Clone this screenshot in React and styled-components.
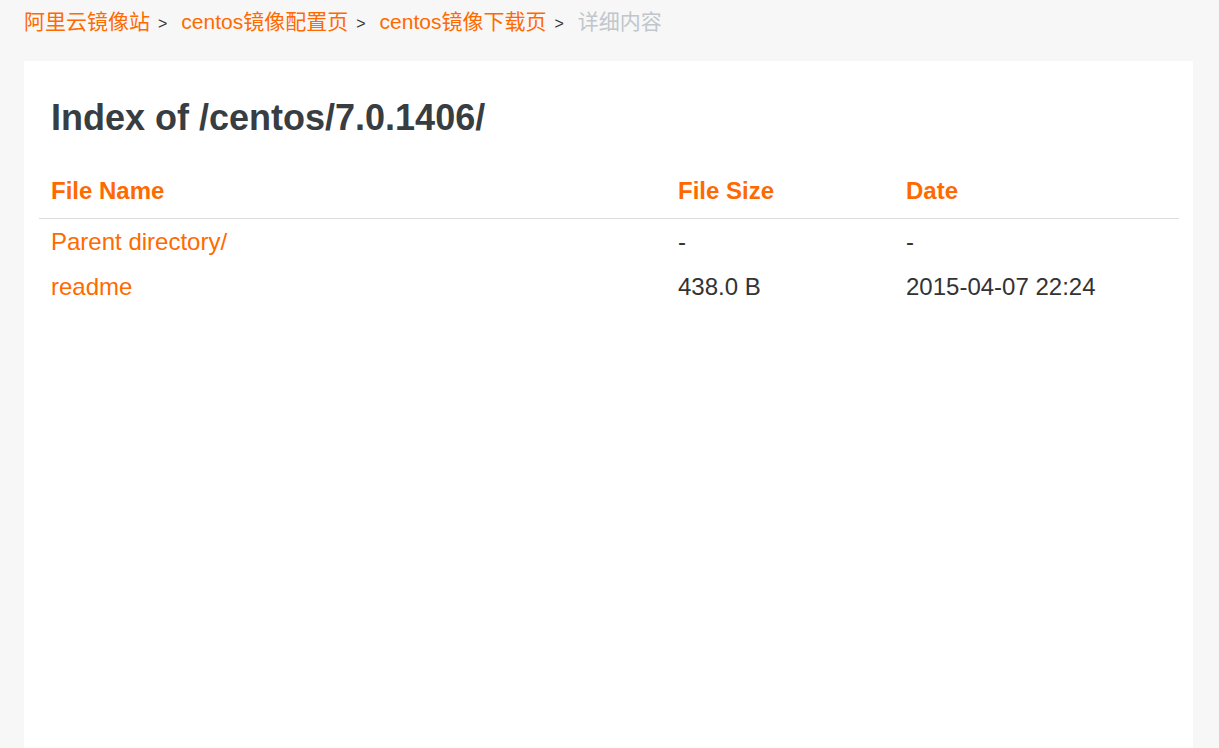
import React from "react";
import styled, { createGlobalStyle } from "styled-components";

const GlobalStyle = createGlobalStyle`
  html, body {
    margin: 0;
    padding: 0;
    background: #f7f7f7;
  }
  body {
    font-family: "Liberation Sans", Arial, "Noto Sans CJK SC", sans-serif;
    color: #333333;
  }
`;

const crumbs = [
  { label: "阿里云镜像站" },
  { label: "centos镜像配置页" },
  { label: "centos镜像下载页" },
  { label: "详细内容", current: true },
];

const files = [
  { name: "Parent directory/", size: "-", date: "-" },
  { name: "readme", size: "438.0 B", date: "2015-04-07 22:24" },
];

const App = () => {
  return (
    <Page>
      <GlobalStyle />
      <Breadcrumb>
        {crumbs.map((c, i) => (
          <React.Fragment key={c.label}>
            <Crumb $current={c.current}>{c.label}</Crumb>
            {i < crumbs.length - 1 && <Separator>&gt;</Separator>}
          </React.Fragment>
        ))}
      </Breadcrumb>

      <Card>
        <Title>Index of /centos/7.0.1406/</Title>
        <FileTable>
          <colgroup>
            <col style={{ width: "55%" }} />
            <col style={{ width: "20%" }} />
            <col style={{ width: "25%" }} />
          </colgroup>
          <thead>
            <tr>
              <HeadCell>File Name</HeadCell>
              <HeadCell>File Size</HeadCell>
              <HeadCell>Date</HeadCell>
            </tr>
          </thead>
          <tbody>
            {files.map((f) => (
              <tr key={f.name}>
                <Cell>
                  <FileLink href="#">{f.name}</FileLink>
                </Cell>
                <Cell>{f.size}</Cell>
                <Cell>{f.date}</Cell>
              </tr>
            ))}
          </tbody>
        </FileTable>
      </Card>
    </Page>
  );
};

export default App;

const Page = styled.div`
  min-height: 100vh;
  display: flex;
  flex-direction: column;
`;

const Breadcrumb = styled.div`
  display: flex;
  align-items: baseline;
  padding: 0 24px;
  height: 44px;
  line-height: 44px;
  font-size: 21px;
  margin-bottom: 17px;
`;

const Crumb = styled.a`
  color: ${(p) => (p.$current ? "#c0c6cc" : "#ff6a00")};
  text-decoration: none;
`;

const Separator = styled.span`
  color: #333333;
  font-size: 16px;
  padding: 0 14px 0 8px;
`;

const Card = styled.div`
  flex: 1;
  background: #ffffff;
  margin: 0 26px 0 24px;
  padding: 0 14px 0 15px;
  min-height: 700px;
`;

const Title = styled.h1`
  margin: 0;
  padding: 37px 0 0 12px;
  font-size: 36px;
  line-height: 40px;
  font-weight: 700;
  color: #373d41;
`;

const FileTable = styled.table`
  width: 100%;
  margin-top: 26px;
  border-collapse: collapse;
  table-layout: fixed;
`;

const HeadCell = styled.th`
  text-align: left;
  color: #ff6a00;
  font-size: 24px;
  font-weight: 700;
  height: 54px;
  padding: 0 12px;
  border-bottom: 1px solid #dddddd;
`;

const Cell = styled.td`
  font-size: 24px;
  color: #333333;
  height: 45px;
  padding: 0 12px;
`;

const FileLink = styled.a`
  color: #ff6a00;
  text-decoration: none;
`;
